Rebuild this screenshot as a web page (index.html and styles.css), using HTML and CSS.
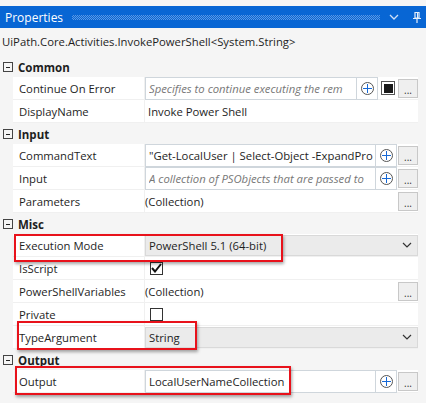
FILE: index.html
```html
<!DOCTYPE html>
<html>
<head>
<meta charset="utf-8">
<link rel="stylesheet" href="styles.css">
</head>
<body>
<div class="panel">
  <div class="titlebar">
    <span class="title">Properties</span>
    <span class="dots"></span>
    <svg class="tb-chev" width="10" height="6" viewBox="0 0 10 6"><path d="M1 1 L5 5 L9 1" fill="none" stroke="#cfe0f7" stroke-width="1.3"/></svg>
    <svg class="tb-pin" width="8" height="11" viewBox="0 0 8 11"><path d="M2 0.5 H6 V6 H2 Z M0 6.5 H8 M4 7 V11" fill="none" stroke="#e6effa" stroke-width="1.2"/><path d="M4.5 1 V6" stroke="#e6effa" stroke-width="1"/></svg>
  </div>
  <div class="typename">UiPath.Core.Activities.InvokePowerShell&lt;System.String&gt;</div>

  <div class="grid">
    <div class="cat"><span class="minus"></span><span class="cat-label">Common</span></div>
    <div class="row tall">
      <div class="name">Continue On Error</div>
      <div class="value">
        <div class="box"><span class="ph">Specifies to continue executing the rem</span></div>
        <div class="plusbox"><span class="plus"></span></div>
        <span class="sq"><span></span></span>
        <span class="more">...</span>
      </div>
    </div>
    <div class="row">
      <div class="name">DisplayName</div>
      <div class="value"><span class="text">Invoke Power Shell</span></div>
    </div>

    <div class="cat"><span class="minus"></span><span class="cat-label">Input</span></div>
    <div class="row tall">
      <div class="name">CommandText</div>
      <div class="value">
        <div class="box"><span class="txt">"Get-LocalUser | Select-Object -ExpandPro</span></div>
        <div class="plusbox"><span class="plus"></span></div>
        <span class="more">...</span>
      </div>
    </div>
    <div class="row tall">
      <div class="name">Input</div>
      <div class="value">
        <div class="box"><span class="ph">A collection of PSObjects that are passed to</span></div>
        <div class="plusbox"><span class="plus"></span></div>
        <span class="more">...</span>
      </div>
    </div>
    <div class="row">
      <div class="name">Parameters</div>
      <div class="value"><span class="text coll">(Collection)</span><span class="spacer"></span><span class="more">...</span></div>
    </div>

    <div class="cat"><span class="minus"></span><span class="cat-label">Misc</span></div>
    <div class="row">
      <div class="name">Execution Mode</div>
      <div class="value">
        <div class="combo"><span>PowerShell 5.1 (64-bit)</span><svg width="10" height="6" viewBox="0 0 10 6"><path d="M1 1 L5 5 L9 1" fill="none" stroke="#333" stroke-width="1.2"/></svg></div>
      </div>
    </div>
    <div class="row">
      <div class="name">IsScript</div>
      <div class="value"><span class="check"><svg width="11" height="10" viewBox="0 0 11 10"><path d="M1 5 L4 8.5 L10 1" fill="none" stroke="#111" stroke-width="2"/></svg></span></div>
    </div>
    <div class="row">
      <div class="name">PowerShellVariables</div>
      <div class="value"><span class="text coll">(Collection)</span><span class="spacer"></span><span class="more">...</span></div>
    </div>
    <div class="row">
      <div class="name">Private</div>
      <div class="value"><span class="check"></span></div>
    </div>
    <div class="row">
      <div class="name">TypeArgument</div>
      <div class="value">
        <div class="combo"><span>String</span><svg width="10" height="6" viewBox="0 0 10 6"><path d="M1 1 L5 5 L9 1" fill="none" stroke="#333" stroke-width="1.2"/></svg></div>
      </div>
    </div>

    <div class="cat"><span class="minus"></span><span class="cat-label">Output</span></div>
    <div class="row tall">
      <div class="name">Output</div>
      <div class="value">
        <div class="box"><span class="txt">LocalUserNameCollection</span></div>
        <div class="plusbox"><span class="plus"></span></div>
        <span class="more">...</span>
      </div>
    </div>
  </div>

  <div class="hl hl-exec"></div>
  <div class="hl hl-type"></div>
  <div class="hl hl-out"></div>
</div>
</body>
</html>
```

FILE: styles.css
```css
html, body {
  margin: 0;
  padding: 0;
}
body {
  background: #f5f5f5;
  font-family: "Open Sans", "Noto Sans", sans-serif;
  font-size: 11.3px;
  color: #1e1e1e;
  width: 426px;
  height: 403px;
  overflow: hidden;
}
.panel {
  position: relative;
  padding-top: 6px;
  height: 397px;
}
.titlebar {
  height: 22px;
  background: #0866d4;
  display: flex;
  align-items: center;
  padding-left: 5px;
  color: #fff;
}
.title {
  font-size: 12px;
}
.dots {
  margin-left: 9px;
  width: 308px;
  height: 5px;
  background: conic-gradient(#5a98e4 25%, transparent 0 50%, #5a98e4 0 75%, transparent 0) 0 0 / 2px 2px;
}
.tb-chev {
  margin-left: 9px;
}
.tb-pin {
  margin-left: 14px;
}
.typename {
  height: 28px;
  line-height: 28px;
  padding-left: 2px;
  font-size: 11.3px;
}
.grid {
  display: flex;
  flex-direction: column;
}
.cat {
  height: 21px;
  display: flex;
  align-items: center;
  padding-left: 3px;
  padding-top: 1px;
  box-sizing: border-box;
}
.minus {
  width: 8px;
  height: 8px;
  border: 1px solid #444;
  position: relative;
  margin-right: 5px;
}
.minus::after {
  content: "";
  position: absolute;
  left: 2px;
  top: 3.5px;
  width: 4px;
  height: 1px;
  background: #222;
}
.cat-label {
  font-weight: 700;
  font-size: 11.5px;
}
.row {
  height: 23px;
  display: flex;
  margin-left: 13px;
  margin-right: 8px;
  background: #fff;
  border-bottom: 1px solid #f0f0f0;
  box-sizing: border-box;
}
.name {
  width: 132px;
  border-right: 1px solid #f0f0f0;
  display: flex;
  align-items: center;
  padding-left: 6px;
  box-sizing: border-box;
}
.value {
  flex: 1;
  display: flex;
  align-items: center;
  min-width: 0;
}
.text {
  padding-left: 3px;
  white-space: nowrap;
}
.coll {
  padding-left: 0;
}
.spacer {
  flex: 1;
}
.box {
  flex: 1;
  min-width: 0;
  height: 23px;
  border: 1px solid #cfd6dc;
  border-right: none;
  box-sizing: border-box;
  display: flex;
  align-items: center;
  padding-left: 3px;
  background: #fff;
}
.ph, .txt {
  flex: 1;
  min-width: 0;
  overflow: hidden;
  white-space: nowrap;
  text-overflow: clip;
}
.ph {
  color: #777;
  font-style: italic;
}
.plusbox {
  width: 22px;
  height: 23px;
  border: 1px solid #cfd6dc;
  box-sizing: border-box;
  display: flex;
  align-items: center;
  justify-content: center;
}
.plus {
  width: 13px;
  height: 13px;
  border: 1px solid #555;
  border-radius: 50%;
  box-sizing: border-box;
  position: relative;
}
.plus::before, .plus::after {
  content: "";
  position: absolute;
  background: #1769d6;
}
.plus::before {
  left: 1px;
  top: 5px;
  width: 9px;
  height: 1.3px;
}
.plus::after {
  left: 5px;
  top: 1px;
  width: 1.3px;
  height: 9px;
}
.sq {
  width: 14px;
  height: 14px;
  border: 1px solid #555;
  box-sizing: border-box;
  display: flex;
  align-items: center;
  justify-content: center;
  margin-left: 3px;
  margin-right: 1px;
}
.sq span {
  width: 9px;
  height: 9px;
  background: #1a1a1a;
}
.more {
  width: 20px;
  height: 19px;
  box-sizing: border-box;
  border: 1px solid #c8c8c8;
  background: #efefef;
  margin-left: 2px;
  display: flex;
  align-items: center;
  justify-content: center;
  padding-top: 4px;
  font-size: 10px;
  line-height: 10px;
  color: #333;
  overflow: hidden;
}
.plusbox + .more {
  margin-left: 1px;
}
.combo {
  flex: 1;
  height: 21px;
  background: #ebebeb;
  border: 1px solid #d9d9d9;
  box-sizing: border-box;
  display: flex;
  align-items: center;
  justify-content: space-between;
  padding-left: 3px;
  padding-right: 5px;
}
.check {
  width: 13px;
  height: 13px;
  border: 1px solid #333;
  box-sizing: border-box;
  margin-left: 5px;
  display: flex;
  align-items: center;
  justify-content: center;
  background: #fff;
}
.hl {
  position: absolute;
  border: 2px solid #e8121b;
  box-shadow: 1px 2px 3px rgba(0, 0, 0, 0.35);
  box-sizing: border-box;
}
.hl-exec {
  left: 14px;
  top: 234px;
  width: 269px;
  height: 28px;
}
.hl-type {
  left: 17px;
  top: 321px;
  width: 180px;
  height: 29px;
}
.hl-out {
  left: 15px;
  top: 366px;
  width: 276px;
  height: 29px;
}
```
